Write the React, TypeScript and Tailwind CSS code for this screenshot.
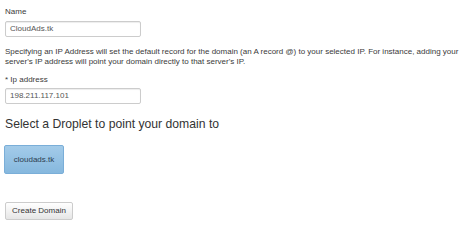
import React from "react";

export default function App() {
  return (
    <div className="w-[474px] h-[232px] bg-white text-[#3a3a3a] font-['Liberation_Sans',Arial,sans-serif] overflow-hidden">
      <div className="pl-[5px] pt-[7px] flex flex-col items-start">
        <div className="text-[8px] leading-[10px] h-[10px]">Name</div>
        <div className="mt-[4px] w-[136px] h-[16px] border border-[#ccc] rounded-[2px] flex items-center px-[4px] text-[8px] text-[#555] shadow-[inset_0_1px_1px_rgba(0,0,0,0.075)]">
          CloudAds.tk
        </div>
        <p className="mt-[10px] text-[8px] leading-[9.5px] w-[466px]">
          Specifying an IP Address will set the default record for the domain (an A record @) to your selected IP. For instance, adding your server's IP address will point your domain directly to that server's IP.
        </p>
        <div className="mt-[9px] text-[8px] leading-[10px] h-[10px]">* Ip address</div>
        <div className="mt-[3px] w-[136px] h-[16px] border border-[#ccc] rounded-[2px] flex items-center px-[4px] text-[8px] text-[#555] shadow-[inset_0_1px_1px_rgba(0,0,0,0.075)]">
          198.211.117.101
        </div>
        <h3 className="mt-[13px] text-[12.2px] leading-[14px] h-[14px] font-normal text-[#333]">Select a Droplet to point your domain to</h3>
        <div className="mt-[14px] -ml-[1px] w-[60px] h-[29px] rounded-[2px] border border-[#7aaed8] bg-gradient-to-b from-[#a3cbe9] to-[#86b8de] flex items-center justify-center text-[8px] text-[#2d3e50]">
          cloudads.tk
        </div>
        <button className="mt-[28px] w-[68px] h-[18px] border border-[#ccc] rounded-[2px] bg-gradient-to-b from-white to-[#e6e6e6] text-[8px] text-[#333] flex items-center justify-center">
          Create Domain
        </button>
      </div>
    </div>
  );
}
